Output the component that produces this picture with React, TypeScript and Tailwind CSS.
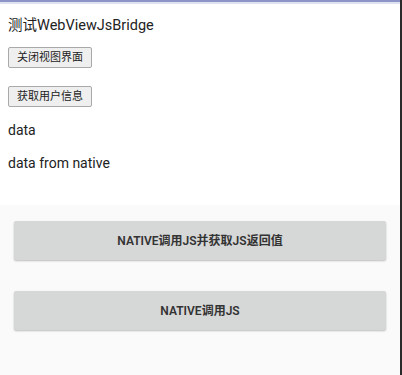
export default function App() {
  return (
    <div className="w-[402px] h-[375px] overflow-hidden flex flex-col bg-white border-r-2 border-[#2a2a2a] font-['Roboto','Noto_Sans_CJK_SC',sans-serif] text-[#222]">
      {/* top edge */}
      <div className="h-[2px] bg-[#8c95c6]" />
      <div className="h-[2px] bg-[#dfe3f1]" />

      {/* web page part */}
      <div className="h-[201px] px-2 pt-[12px] flex flex-col items-start">
        <div className="text-[14.5px] leading-5">测试WebViewJsBridge</div>
        <button className="mt-[11px] h-[21px] w-[84px] text-[11px] leading-none bg-[#efefef] border border-[#a9a9a9] rounded-[2px] text-[#222]">
          关闭视图界面
        </button>
        <button className="mt-[18px] h-[21px] w-[84px] text-[11px] leading-none bg-[#efefef] border border-[#a9a9a9] rounded-[2px] text-[#222]">
          获取用户信息
        </button>
        <div className="mt-[13px] text-[14px] leading-5">data</div>
        <div className="mt-[13px] text-[14px] leading-5">data from native</div>
      </div>

      {/* native part */}
      <div className="flex-1 bg-[#fafafa] px-[14px] pt-[16px] flex flex-col gap-[31px]">
        <button className="h-[39px] w-full bg-[#d6d7d7] rounded-[2px] shadow-[0_1px_2px_rgba(0,0,0,0.25)] text-[12px] font-semibold text-[#333]">
          NATIVE调用JS并获取JS返回值
        </button>
        <button className="h-[39px] w-full bg-[#d6d7d7] rounded-[2px] shadow-[0_1px_2px_rgba(0,0,0,0.25)] text-[12px] font-semibold text-[#333]">
          NATIVE调用JS
        </button>
      </div>
    </div>
  );
}
